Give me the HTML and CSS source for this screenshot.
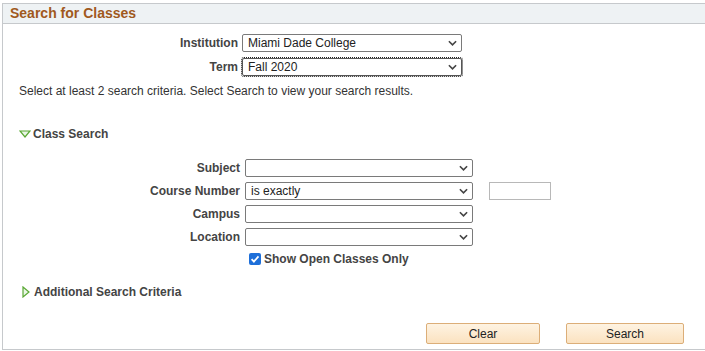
FILE: index.html
```html
<!DOCTYPE html>
<html lang="en">
<head>
    <meta charset="UTF-8">
    <title>Search for Classes</title>
    <link rel="stylesheet" href="styles.css">
</head>
<body>
<div class="panel">
    <div class="panel-header">Search for Classes</div>
    <div class="panel-body">
        <div class="form-grid top-grid">
            <label class="field-label">Institution</label>
            <div class="select"><span>Miami Dade College</span><svg class="chev" viewBox="0 0 10 6"><path d="M1 1l4 4 4-4" /></svg></div>
            <label class="field-label">Term</label>
            <div class="select focused"><span>Fall 2020</span><svg class="chev" viewBox="0 0 10 6"><path d="M1 1l4 4 4-4" /></svg></div>
        </div>
        <p class="hint">Select at least 2 search criteria. Select Search to view your search results.</p>

        <div class="toggle">
            <svg class="tri-down" viewBox="0 0 12 8"><path d="M1 1h10L6 7z" /></svg>
            <span>Class Search</span>
        </div>

        <div class="form-grid criteria-grid">
            <label class="field-label">Subject</label>
            <div class="select"><span></span><svg class="chev" viewBox="0 0 10 6"><path d="M1 1l4 4 4-4" /></svg></div>
            <div></div>
            <label class="field-label">Course Number</label>
            <div class="select"><span>is exactly</span><svg class="chev" viewBox="0 0 10 6"><path d="M1 1l4 4 4-4" /></svg></div>
            <div class="text-input"></div>
            <label class="field-label">Campus</label>
            <div class="select"><span></span><svg class="chev" viewBox="0 0 10 6"><path d="M1 1l4 4 4-4" /></svg></div>
            <div></div>
            <label class="field-label">Location</label>
            <div class="select"><span></span><svg class="chev" viewBox="0 0 10 6"><path d="M1 1l4 4 4-4" /></svg></div>
            <div></div>
            <div></div>
            <div class="check-row">
                <span class="checkbox"><svg viewBox="0 0 12 12"><path d="M2.6 6.2l2.3 2.4 4.6-5.2" /></svg></span>
                <span>Show Open Classes Only</span>
            </div>
            <div></div>
        </div>

        <div class="toggle toggle-closed">
            <svg class="tri-right" viewBox="0 0 8 12"><path d="M1 1l6 5-6 5z" /></svg>
            <span>Additional Search Criteria</span>
        </div>

        <div class="actions">
            <button class="btn btn-clear">Clear</button>
            <button class="btn btn-search">Search</button>
        </div>
    </div>
</div>
</body>
</html>
```

FILE: styles.css
```css
body {
    margin: 0;
    font-family: "Liberation Sans", Arial, sans-serif;
    font-size: 12px;
    color: #333;
    background: #fff;
}
.panel {
    margin: 3px 0 0 2px;
    border-left: 1px solid #c6c9cc;
    border-bottom: 1px solid #c6c9cc;
    height: 347px;
    box-sizing: border-box;
    display: flex;
    flex-direction: column;
}
.panel-header {
    height: 19px;
    line-height: 19px;
    padding-left: 7px;
    background: #eef2f4;
    border-top: 1px solid #c6c9cc;
    border-bottom: 1px solid #c6c9cc;
    font-size: 14px;
    font-weight: bold;
    color: #a0591d;
}
.panel-body {
    flex: 1;
    display: flex;
    flex-direction: column;
}
.form-grid {
    display: grid;
    align-items: center;
}
.top-grid {
    margin-top: 10px;
    grid-template-columns: 235px 220px;
    column-gap: 4px;
    row-gap: 6px;
}
.criteria-grid {
    margin-top: 18px;
    grid-template-columns: 237px 228px auto;
    column-gap: 5px;
    row-gap: 5px;
}
.criteria-grid .text-input {
    margin-left: 11px;
    width: 62px;
}
.field-label {
    text-align: right;
    font-weight: bold;
    color: #444;
    font-size: 12px;
}
.select {
    height: 18px;
    border: 1px solid #7a7a7a;
    border-radius: 2px;
    background: #fff;
    display: flex;
    align-items: center;
    justify-content: space-between;
    padding: 0 4px 0 5px;
    box-sizing: border-box;
    color: #222;
    font-size: 12px;
}
.select.focused {
    outline: 1px dotted #222;
    outline-offset: 0;
    border-color: #555;
}
.chev {
    width: 9px;
    height: 6px;
    fill: none;
    stroke: #444;
    stroke-width: 1.8;
}
.text-input {
    height: 18px;
    border: 1px solid #b8b8b8;
    box-sizing: border-box;
    background: #fff;
}
.hint {
    margin: 8px 0 0 16px;
    color: #333;
    font-size: 12px;
}
.toggle {
    margin: 29px 0 0 16px;
    display: flex;
    align-items: center;
    font-weight: bold;
    color: #444;
    font-size: 12px;
}
.tri-down {
    width: 12px;
    height: 8px;
    fill: #e9f6e5;
    stroke: #5aa834;
    stroke-width: 1.2;
    margin-right: 2px;
}
.toggle-closed {
    margin-top: 19px;
    margin-left: 19px;
}
.tri-right {
    width: 8px;
    height: 12px;
    fill: #e9f6e5;
    stroke: #5aa834;
    stroke-width: 1.2;
    margin-right: 4px;
}
.check-row {
    display: flex;
    align-items: center;
    padding-left: 4px;
    font-weight: bold;
    color: #444;
    margin-top: 1px;
}
.checkbox {
    width: 12px;
    height: 12px;
    border-radius: 2px;
    background: #1e6fd9;
    margin-right: 3px;
    display: inline-flex;
}
.checkbox svg {
    width: 12px;
    height: 12px;
    fill: none;
    stroke: #fff;
    stroke-width: 1.8;
}
.actions {
    margin-top: auto;
    margin-bottom: 5px;
    display: flex;
    justify-content: flex-end;
    gap: 26px;
    padding-right: 21px;
}
.btn {
    height: 21px;
    border: 1px solid #dcae78;
    border-radius: 2px;
    background: linear-gradient(#fef3e2, #fbe2c0);
    font-family: "Liberation Sans", Arial, sans-serif;
    font-size: 12px;
    color: #222;
    padding: 0;
}
.btn-clear {
    width: 114px;
}
.btn-search {
    width: 118px;
}
```
